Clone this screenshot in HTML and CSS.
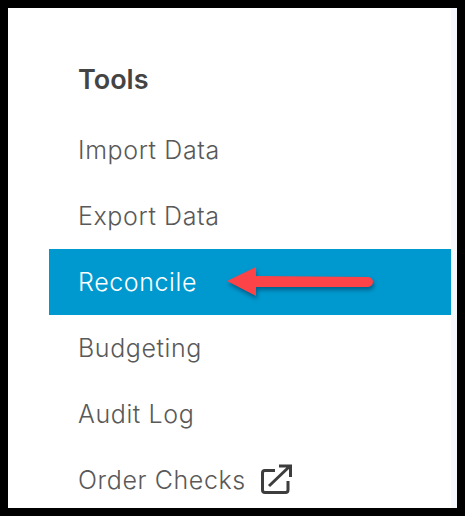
FILE: index.html
```html
<!DOCTYPE html>
<html>
<head>
	<title>Tools</title>
	<link rel="stylesheet" href="styles.css">
</head>
<body>
	<nav class="toolsMenu">
		<h2 class="toolsTitle">Tools</h2>
		<a class="toolsLink">Import Data</a>
		<a class="toolsLink">Export Data</a>
		<a class="toolsLink active">Reconcile
			<svg class="arrow" width="150" height="34" viewBox="0 0 150 34">
				<path d="M2 16 L31 2 L31 11 L143 12 A5 5 0 0 1 143 22 L31 22 L31 31 Z" fill="#fb4348"/>
			</svg>
		</a>
		<a class="toolsLink">Budgeting</a>
		<a class="toolsLink">Audit Log</a>
		<a class="toolsLink">Order Checks
			<svg class="extIcon" width="34" height="34" viewBox="0 0 34 34" fill="none" stroke="#3d3d3d" stroke-width="3">
				<path d="M15 7.5 H5 Q2.5 7.5 2.5 10 V27 Q2.5 29.5 5 29.5 H25.5 Q28 29.5 28 27 V18"/>
				<path d="M9 23 L30 3 M19 3 H30.5 V14"/>
			</svg>
		</a>
	</nav>
</body>
</html>
```

FILE: styles.css
```css
html, body {
	margin: 0;
	padding: 0;
	height: 100%;
}

body {
	box-sizing: border-box;
	background-color: #fff;
	border: 8px solid #000;
	box-shadow: inset -6px 0 0 #f5f9fe;
	font-family: "Inter", "Liberation Sans", Arial, sans-serif;
	overflow: hidden;
}

.toolsMenu {
	display: flex;
	flex-direction: column;
	margin-left: 41px;
	margin-right: 6px;
	padding-top: 39px;
}

.toolsTitle {
	height: 66px;
	margin: 0 0 4px 29px;
	color: #444;
	font-size: 27px;
	font-weight: 600;
	line-height: 66px;
}

.toolsLink {
	position: relative;
	display: flex;
	align-items: center;
	gap: 14px;
	height: 66px;
	padding-left: 29px;
	color: #595959;
	font-size: 25px;
	font-weight: 300;
	letter-spacing: 0.6px;
}

.active {
	background-color: #0099cf;
	color: #fff;
}

.arrow {
	position: absolute;
	left: 176px;
	top: 16px;
	filter: drop-shadow(1px 3px 2px rgba(0, 40, 70, 0.5));
}
```
